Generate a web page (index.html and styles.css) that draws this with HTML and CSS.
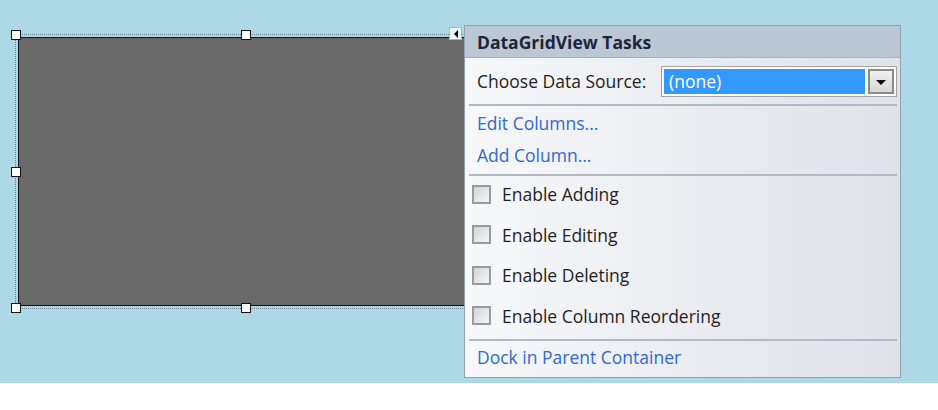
FILE: index.html
```html
<!DOCTYPE html>
<html lang="en">
<head>
  <meta charset="UTF-8">
  <title>DataGridView Tasks</title>
  <link rel="stylesheet" href="styles.css">
</head>
<body>
  <div class="surface">
    <div class="selection">
      <div class="grid"></div>
      <span class="handle h-tl"></span>
      <span class="handle h-tm"></span>
      <span class="handle h-ml"></span>
      <span class="handle h-bl"></span>
      <span class="handle h-bm"></span>
    </div>

    <div class="smart-tag"><span class="tag-arrow"></span></div>

    <div class="tasks">
      <div class="tasks-header">DataGridView Tasks</div>

      <div class="row source-row">
        <label for="source">Choose Data Source:</label>
        <div class="combo" id="source">
          <span class="combo-value">(none)</span>
          <span class="combo-btn"><span class="down"></span></span>
        </div>
      </div>

      <div class="sep"></div>

      <div class="links">
        <a class="row link" href="#">Edit Columns...</a>
        <a class="row link" href="#">Add Column...</a>
      </div>

      <div class="sep"></div>

      <div class="checks">
        <div class="row check"><span class="box"></span>Enable Adding</div>
        <div class="row check"><span class="box"></span>Enable Editing</div>
        <div class="row check"><span class="box"></span>Enable Deleting</div>
        <div class="row check"><span class="box"></span>Enable Column Reordering</div>
      </div>

      <div class="sep"></div>

      <a class="row link dock" href="#">Dock in Parent Container</a>
    </div>
  </div>
</body>
</html>
```

FILE: styles.css
```css
body {
  margin: 0;
  background: #fff;
  font-family: "Open Sans", "Noto Sans", sans-serif;
  font-size: 17.5px;
  color: #1f1f1f;
}
.surface {
  position: relative;
  height: 383px;
  background: #add8e6;
  overflow: hidden;
}

/* selected grid on the design surface */
.selection {
  position: absolute;
  left: 15px;
  top: 34px;
  width: 462px;
  height: 275px;
  box-sizing: border-box;
  border: 1px dotted #6d7b88;
  padding: 2px;
}
.grid {
  height: 100%;
  box-sizing: border-box;
  background: #696969;
  border: 1px solid #111;
}
.handle {
  position: absolute;
  width: 10px;
  height: 10px;
  box-sizing: border-box;
  background: #fff;
  border: 1px solid #111;
}
.h-tl { left: -5px; top: -5px; }
.h-tm { left: calc(50% - 5px); top: -5px; }
.h-ml { left: -5px; top: calc(50% - 5px); }
.h-bl { left: -5px; bottom: -5px; }
.h-bm { left: calc(50% - 5px); bottom: -5px; }

.smart-tag {
  position: absolute;
  left: 449px;
  top: 27px;
  width: 13px;
  height: 13px;
  box-sizing: border-box;
  background: #eef3f8;
  border: 1px solid #a8b7c7;
  display: flex;
  align-items: center;
  justify-content: center;
}
.tag-arrow {
  width: 0;
  height: 0;
  border-top: 4px solid transparent;
  border-bottom: 4px solid transparent;
  border-right: 4px solid #000;
}

/* tasks panel */
.tasks {
  position: absolute;
  left: 464px;
  top: 25px;
  width: 437px;
  height: 353px;
  box-sizing: border-box;
  border: 1px solid #95a0af;
  background: linear-gradient(to right, #f7f8fa, #dfe2e9);
  display: flex;
  flex-direction: column;
}
.tasks-header {
  height: 32px;
  box-sizing: border-box;
  background: #bcc7d6;
  border-bottom: 1px solid #a6b1c1;
  padding-left: 12px;
  font-weight: bold;
  color: #1c2638;
  display: flex;
  align-items: center;
}
.row {
  display: flex;
  align-items: center;
  padding-left: 12px;
}
.source-row {
  height: 46px;
  padding-right: 3px;
}
.source-row label {
  flex: 1;
}
.combo {
  width: 236px;
  height: 31px;
  box-sizing: border-box;
  border: 1px solid #a3a3a3;
  background: #fff;
  padding: 2px;
  display: flex;
  gap: 3px;
}
.combo-value {
  flex: 1;
  background: #3399ff;
  color: #fff;
  padding-left: 5px;
  display: flex;
  align-items: center;
}
.combo-btn {
  width: 26px;
  box-sizing: border-box;
  border: 2px solid #8a8a8a;
  background: linear-gradient(#f0f0f0, #d8d8d8);
  display: flex;
  align-items: center;
  justify-content: center;
}
.down {
  width: 0;
  height: 0;
  border-left: 5px solid transparent;
  border-right: 5px solid transparent;
  border-top: 5px solid #000;
  margin-top: 2px;
}
.sep {
  height: 2px;
  margin: 0 3px 0 4px;
  background: #b2b8c4;
}
.links {
  padding: 1px 0 3px;
}
.link {
  height: 32px;
  color: #3068d2;
  text-decoration: none;
}
.checks {
  padding-bottom: 3px;
}
.check {
  height: 40.5px;
  padding-left: 7px;
}
.check:first-child {
  margin-top: -2px;
}
.box {
  width: 19px;
  height: 19px;
  box-sizing: border-box;
  border: 2px solid #9a9b9c;
  background: linear-gradient(135deg, #d4d5d7, #f6f6f7);
  margin-right: 11px;
}
.dock {
  height: 31px;
}
```
